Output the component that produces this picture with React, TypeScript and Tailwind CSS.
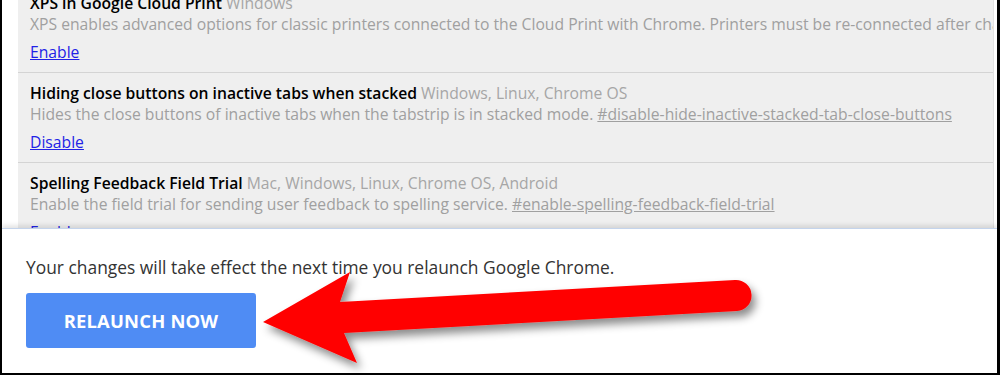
import React from 'react';

interface Flag {
  title: string;
  platforms: string;
  description: string;
  hash?: string;
  action: string;
}

const flags: Flag[] = [
  {
    title: 'XPS in Google Cloud Print',
    platforms: 'Windows',
    description:
      'XPS enables advanced options for classic printers connected to the Cloud Print with Chrome. Printers must be re-connected after changing this flag.',
    action: 'Enable',
  },
  {
    title: 'Hiding close buttons on inactive tabs when stacked',
    platforms: 'Windows, Linux, Chrome OS',
    description: 'Hides the close buttons of inactive tabs when the tabstrip is in stacked mode.',
    hash: '#disable-hide-inactive-stacked-tab-close-buttons',
    action: 'Disable',
  },
  {
    title: 'Spelling Feedback Field Trial',
    platforms: 'Mac, Windows, Linux, Chrome OS, Android',
    description: 'Enable the field trial for sending user feedback to spelling service.',
    hash: '#enable-spelling-feedback-field-trial',
    action: 'Enable',
  },
];

const font = { fontFamily: '"Open Sans", "Noto Sans", sans-serif' };

function FlagRow({ flag, first }: { flag: Flag; first: boolean }) {
  return (
    <div className={`px-[12px] pt-[10px] pb-[10px] ${first ? '' : 'border-t border-[#d4d4d4]'}`}>
      <div className="h-[20px] leading-[20px] text-[15.7px] whitespace-nowrap">
        <span className="font-semibold text-black">{flag.title}</span>{' '}
        <span className="text-[#a6a6a6]">{flag.platforms}</span>
      </div>
      <div className="h-[22px] leading-[22px] text-[15.7px] text-[#a0a0a0] whitespace-nowrap">
        {flag.description}
        {flag.hash && (
          <>
            {' '}
            <span className="underline">{flag.hash}</span>
          </>
        )}
      </div>
      <div className="mt-[7px] h-[20px] leading-[20px] text-[15.7px]">
        <a className="text-[#2222e6] underline cursor-pointer">{flag.action}</a>
      </div>
    </div>
  );
}

function Arrow() {
  return (
    <svg className="absolute inset-0 z-20 pointer-events-none" width="1000" height="375" viewBox="0 0 1000 375">
      <defs>
        <filter id="arrowShadow" x="-10%" y="-30%" width="130%" height="180%">
          <feDropShadow dx="4" dy="6" stdDeviation="4" floodColor="#000" floodOpacity="0.45" />
        </filter>
      </defs>
      <path
        d="M263,322 L350,272 L340,302 L735,280 A15.5,15.5 0 0 1 737,311 L344,333 L357,363 Z"
        fill="#ff0000"
        filter="url(#arrowShadow)"
      />
    </svg>
  );
}

export default function App() {
  return (
    <div className="relative w-[1000px] h-[375px] overflow-hidden bg-white" style={font}>
      <div className="w-full h-full flex flex-col border-l-2 border-b-2 border-r-[3px] border-black">
        {/* flags list, scrolled */}
        <div className="h-[228px] overflow-hidden pl-[16px] pr-[3px]">
          <div className="h-full bg-[#efefef] border-r border-[#e2e2e2] overflow-hidden">
            <div className="-mt-[17px]">
              {flags.map((f, i) => (
                <FlagRow key={f.title} flag={f} first={i === 0} />
              ))}
            </div>
          </div>
        </div>

        {/* relaunch footer */}
        <div className="relative z-10 flex-1 border-t border-[#c4d4ec] shadow-[0_-3px_4px_rgba(0,0,0,0.10)] bg-white pl-[24px] pt-[27px]">
          <p className="h-[22px] leading-[22px] text-[17.4px] text-[#333]">
            Your changes will take effect the next time you relaunch Google Chrome.
          </p>
          <button className="mt-[15px] w-[230px] h-[55px] rounded-[3px] bg-[#4f8cf4] text-white font-bold text-[18.4px] tracking-[0.2px]">
            RELAUNCH NOW
          </button>
        </div>
      </div>
      <Arrow />
    </div>
  );
}
